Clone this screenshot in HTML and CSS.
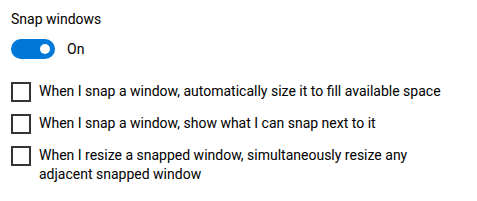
FILE: index.html
```html
<!DOCTYPE html>
<html>
<head>
  <title>Multitasking</title>
  <link rel="stylesheet" href="styles.css">
</head>
<body>
  <div class="group">
    <div class="group-title">Snap windows</div>
    <div class="toggle-row">
      <label class="switch">
        <input type="checkbox" checked>
        <span class="slider"></span>
      </label>
      <span class="toggle-state">On</span>
    </div>

    <div class="options">
      <label class="check">
        <input type="checkbox">
        <span class="box"></span>
        <span class="check-text">When I snap a window, automatically size it to fill available space</span>
      </label>
      <label class="check">
        <input type="checkbox">
        <span class="box"></span>
        <span class="check-text">When I snap a window, show what I can snap next to it</span>
      </label>
      <label class="check">
        <input type="checkbox">
        <span class="box"></span>
        <span class="check-text">When I resize a snapped window, simultaneously resize any adjacent snapped window</span>
      </label>
    </div>
  </div>
</body>
</html>
```

FILE: styles.css
```css
body {
  margin: 0;
  padding: 0;
  background: #fff;
  font-family: Roboto, "Noto Sans", Arial, sans-serif;
  font-size: 14px;
  color: #000;
}

.group {
  padding: 9px 11px;
  width: 440px;
}

.group-title {
  line-height: 20px;
}

.toggle-row {
  display: flex;
  align-items: center;
  margin-top: 10px;
  height: 20px;
}

.switch {
  position: relative;
  display: inline-block;
  width: 44px;
  height: 20px;
}

.switch input { opacity: 0; width: 0; height: 0; margin: 0; }

.slider {
  position: absolute;
  top: 0; left: 0; right: 0; bottom: 0;
  background-color: #ccc;
  border-radius: 10px;
}

.slider:before {
  position: absolute;
  content: "";
  width: 10px;
  height: 10px;
  left: 5px;
  top: 5px;
  background-color: #fff;
  border-radius: 50%;
}

input:checked + .slider {
  background-color: #0078d7;
}

input:checked + .slider:before {
  transform: translateX(24px);
}

.toggle-state {
  margin-left: 12px;
}

.options {
  margin-top: 23px;
}

.check {
  display: flex;
  align-items: flex-start;
  margin-bottom: 12px;
}

.check input { display: none; }

.box {
  flex: none;
  width: 16px;
  height: 16px;
  border: 2px solid #333;
  background: #fff;
}

.check-text {
  margin-left: 8px;
  line-height: 19px;
}
```
